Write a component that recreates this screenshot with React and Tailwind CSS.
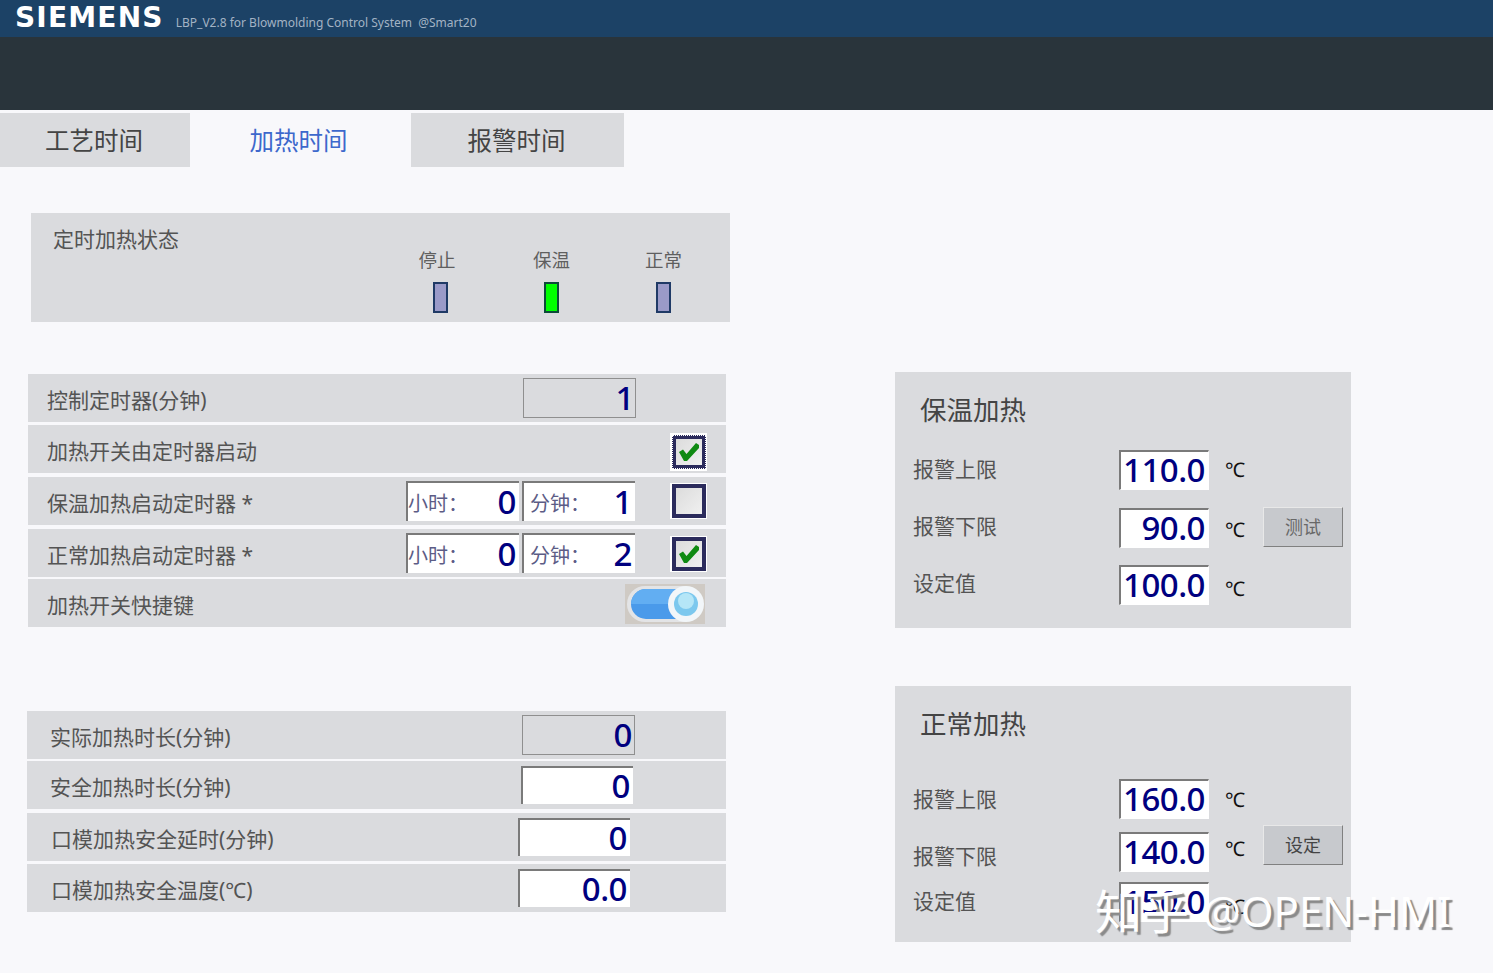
import React from "react";

const FONT = "font-['Noto_Sans','Noto_Sans_CJK_SC',sans-serif]";

const Tick = () => (
  <svg viewBox="0 0 22 20" className="w-[22px] h-[20px]">
    <path d="M1 10 L5 7.5 L8.5 12 L18 1 L21 3 L21 6 L9 19 L6 19 Z" fill="#0f8a12" />
  </svg>
);

const Checkbox = ({ checked, focused, className = "" }) => (
  <div className={`bg-white flex items-center justify-center w-[37px] ${className}`}>
    <div className="w-[34px] h-[34px] border-[4px] border-[#2b2b5c] bg-gradient-to-br from-[#dcdcdc] to-[#f0f0f0] flex items-center justify-center relative">
      {checked && <Tick />}
      {focused && <div className="absolute -inset-[4px] border border-dotted border-white" />}
    </div>
  </div>
);

const Value = ({ children }) => (
  <span className="text-[33px] leading-none pb-[2px] font-medium tracking-[-0.5px] text-[#00007f]">{children}</span>
);

// white sunken input
const Field = ({ value, className = "" }) => (
  <div className={`bg-white border-t-2 border-l-2 border-[#7a7a7a] flex items-center justify-end pr-[3px] ${className}`}>
    <Value>{value}</Value>
  </div>
);

const ReadOnly = ({ value, className = "" }) => (
  <div className={`border border-[#8f8f8f] flex items-center justify-end ${className}`}>
    <Value>{value}</Value>
  </div>
);

const TimeField = ({ label, value, className = "" }) => (
  <div className={`w-[113px] h-[40px] bg-white border-t-2 border-l-2 border-[#7a7a7a] flex items-center justify-between pr-[3px] ${className}`}>
    <span className="text-[20px] text-[#5c5c86] pt-[4px]">{label}</span>
    <Value>{value}</Value>
  </div>
);

const Row = ({ label, className = "", labelClass = "ml-[19px]", children }) => (
  <div className={`w-full h-[48px] bg-[#dadbde] flex items-center shrink-0 ${className}`}>
    <span className={`text-[21px] pt-[5px] text-[#545454] ${labelClass}`}>{label}</span>
    {children}
  </div>
);

const Toggle = () => (
  <svg viewBox="0 0 80 40" className="w-[80px] h-[40px] ml-auto mr-[21px] mt-[2px]">
    <rect width="80" height="40" fill="#cfcac4" />
    <rect x="2" y="2" width="72" height="36" rx="18" fill="#e3e4e6" />
    <rect x="6" y="5" width="62" height="30" rx="15" fill="#4a9aea" />
    <path d="M6 20 a15 15 0 0 1 15-15 h47 v15 Z" fill="#62aef2" />
    <circle cx="61" cy="20" r="18" fill="#f2f6f9" />
    <circle cx="61" cy="20" r="12" fill="#7cc8ee" />
    <circle cx="61" cy="17" r="8" fill="#b5e6f7" />
  </svg>
);

const Light = ({ label, on, className = "", labelClass = "" }) => (
  <div className={`flex flex-col items-center w-[61px] mt-[35px] ${className}`}>
    <span className={`text-[18.5px] leading-[24px] text-[#5f5f5f] ${labelClass}`}>{label}</span>
    <div className={`w-[15px] h-[31px] mt-[10px] border-2 ${on ? "bg-[#00ff00] border-[#0d4a3a]" : "bg-[#9a9ac8] border-[#1f3a66]"}`} />
  </div>
);

const Setting = ({ label, value, top, labelTop, unitTop, button, buttonClass }) => (
  <div className={`flex items-start h-[40px] ${top}`}>
    <span className={`text-[21px] leading-[28px] text-[#545454] w-[206px] ml-[18px] ${labelTop}`}>{label}</span>
    <Field value={value} className="w-[90px] h-[40px] border-b border-r border-b-white border-r-white" />
    <span className={`text-[20px] leading-[28px] text-[#111] ml-[16px] w-[40px] ${unitTop}`}>℃</span>
    {button && (
      <button className={`w-[80px] h-[40px] -ml-[2px] bg-[#c7c9cd] border border-t-[#e8e8e8] border-l-[#e8e8e8] border-r-[#808080] border-b-[#808080] text-[18px] ${buttonClass}`}>
        {button}
      </button>
    )}
  </div>
);

export default function App() {
  return (
    <div className={`w-[1493px] h-[973px] overflow-hidden relative bg-[#f8f8fb] ${FONT}`}>
      {/* header */}
      <div className="h-[37px] bg-[#1c4266] flex items-start pl-[15px]">
        <span className="font-['DejaVu_Sans',sans-serif] text-[28px] leading-[36px] font-bold text-white tracking-[1.2px] whitespace-nowrap">SIEMENS</span>
        <span className="text-[12px] leading-[18px] mt-[14px] ml-[12px] text-[#a3b3c4] whitespace-nowrap">
          LBP_V2.8 for Blowmolding Control System&nbsp; @Smart20
        </span>
      </div>
      <div className="h-[73px] bg-[#29343b]" />

      {/* tabs */}
      <div className="flex mt-[3px] h-[54px] text-[24.5px]">
        <div className="w-[190px] bg-[#dadbde] text-[#444] flex items-center justify-center pr-[2px] pt-[2px]">工艺时间</div>
        <div className="w-[221px] text-[#3d68cc] flex items-center justify-center pr-[4px] pt-[2px]">加热时间</div>
        <div className="w-[213px] bg-[#dadbde] text-[#444] flex items-center justify-center pr-[2px] pt-[2px]">报警时间</div>
      </div>

      <div className="flex">
        {/* left column */}
        <div className="w-[895px] flex flex-col pl-[27px] shrink-0">
          <div className="ml-[4px] mt-[46px] w-[699px] h-[109px] bg-[#dadbde] flex items-start">
            <span className="text-[21px] leading-[28px] text-[#545454] ml-[22px] mt-[12px] w-[357px]">定时加热状态</span>
            <Light label="停止" labelClass="-ml-[7px]" />
            <Light label="保温" on className="ml-[50px]" />
            <Light label="正常" className="ml-[51px]" />
          </div>

          <div className="flex flex-col mt-[52px] ml-[1px] w-[698px]">
            <Row label="控制定时器(分钟)">
              <ReadOnly value="1" className="w-[113px] h-[40px] ml-auto mr-[90px] pr-[1px]" />
            </Row>
            <Row label="加热开关由定时器启动" className="mt-[3px]">
              <Checkbox checked focused className="ml-auto mr-[19px] h-[38px] mt-[5px]" />
            </Row>
            <Row label="保温加热启动定时器 *" className="mt-[4px]">
              <TimeField label="小时：" value="0" className="ml-auto" />
              <TimeField label="分钟：" value="1" className="ml-[3px] pl-[6px]" />
              <Checkbox className="ml-[35px] mr-[19px] h-[36px]" />
            </Row>
            <Row label="正常加热启动定时器 *" className="mt-[4px]">
              <TimeField label="小时：" value="0" className="ml-auto" />
              <TimeField label="分钟：" value="2" className="ml-[3px] pl-[6px]" />
              <Checkbox checked className="ml-[35px] mr-[19px] h-[36px] mt-[2px]" />
            </Row>
            <Row label="加热开关快捷键" className="mt-[2px]">
              <Toggle />
            </Row>
          </div>

          <div className="flex flex-col mt-[84px] w-[699px]">
            <Row label="实际加热时长(分钟)" labelClass="ml-[23px]">
              <ReadOnly value="0" className="w-[113px] h-[40px] ml-auto mr-[91px] pr-[2px]" />
            </Row>
            <Row label="安全加热时长(分钟)" className="mt-[2px]" labelClass="ml-[23px]">
              <Field value="0" className="w-[112px] h-[38px] ml-auto mr-[93px]" />
            </Row>
            <Row label="口模加热安全延时(分钟)" className="mt-[4px]" labelClass="ml-[24px]">
              <Field value="0" className="w-[112px] h-[38px] ml-auto mr-[96px]" />
            </Row>
            <Row label="口模加热安全温度(℃)" className="mt-[3px]" labelClass="ml-[24px]">
              <Field value="0.0" className="w-[112px] h-[38px] ml-auto mr-[96px]" />
            </Row>
          </div>
        </div>

        {/* right column */}
        <div className="flex flex-col pt-[205px]">
          <div className="w-[456px] h-[256px] bg-[#dadbde] flex flex-col">
            <h2 className="text-[26.5px] leading-[36px] text-[#444] ml-[25px] mt-[20px]">保温加热</h2>
            <Setting label="报警上限" value="110.0" top="mt-[22px]" labelTop="mt-[5px]" unitTop="mt-[6px]" />
            <Setting label="报警下限" value="90.0" top="mt-[18px]" labelTop="mt-[4px]" unitTop="mt-[8px]" button="测试" buttonClass="-mt-[1px] text-[#686868]" />
            <Setting label="设定值" value="100.0" top="mt-[17px]" labelTop="mt-[4px]" unitTop="mt-[10px] -ml-[2px]" />
          </div>

          <div className="w-[456px] h-[256px] bg-[#dadbde] flex flex-col mt-[58px]">
            <h2 className="text-[26.5px] leading-[36px] text-[#444] ml-[25px] mt-[20px]">正常加热</h2>
            <Setting label="报警上限" value="160.0" top="mt-[37px]" labelTop="mt-[6px]" unitTop="mt-[7px]" />
            <Setting label="报警下限" value="140.0" top="mt-[13px]" labelTop="mt-[10px]" unitTop="mt-[3px]" button="设定" buttonClass="-mt-[7px] text-[#444]" />
            <Setting label="设定值" value="150.0" top="mt-[10px]" labelTop="mt-[5px]" unitTop="mt-[11px]" />
          </div>
        </div>
      </div>

      {/* watermark */}
      <div className="absolute left-[1095px] top-[880px] h-[62px] flex items-center gap-[14px] leading-none whitespace-nowrap text-white [text-shadow:3px_3px_1px_#8a8a8a]">
        <span className="text-[47px]">知乎</span>
        <span className="text-[42px]">@OPEN-HMI</span>
      </div>
    </div>
  );
}
